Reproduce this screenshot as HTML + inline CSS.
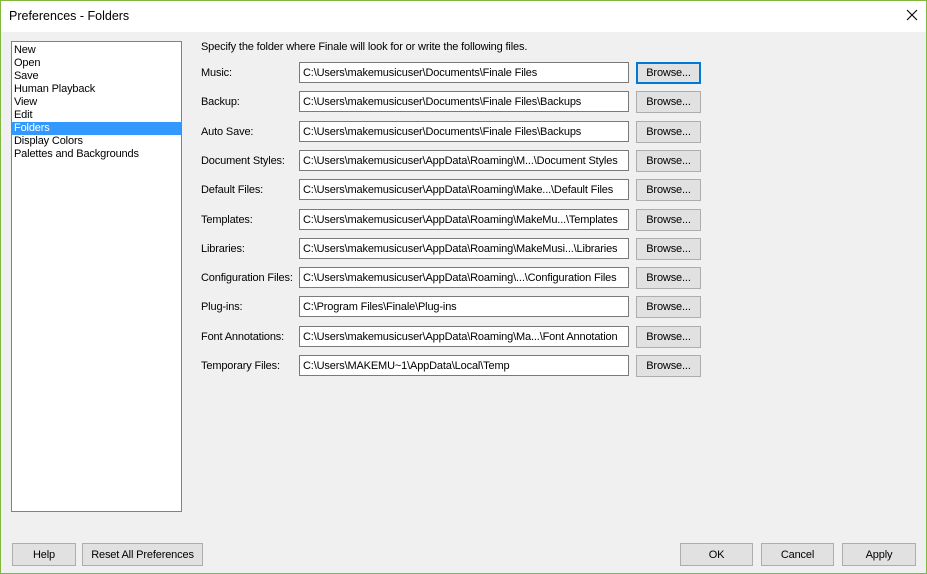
<!DOCTYPE html>
<html><head><style>
body{margin:0;width:927px;height:574px;overflow:hidden;font-family:"Liberation Sans",sans-serif;font-size:11px;letter-spacing:-0.15px;color:#000}
#win{position:absolute;left:0;top:0;width:925px;height:572px;border:1px solid #7eb83c;background:#f0f0f0}
#title{position:absolute;left:0;top:0;width:925px;height:31px;background:#fff;}
#title span{position:absolute;left:8px;top:8px;font-size:12.5px;letter-spacing:0}
#close{position:absolute;right:8px;top:8px;width:12px;height:12px}
#list{position:absolute;left:10px;top:40px;width:169px;height:469px;background:#fff;border:1px solid #828282}
#list div{height:13px;line-height:13px;padding-left:2px;white-space:nowrap}
#list .sel{background:#3399ff;color:#fff}
.lbl{position:absolute;left:200px}
.fld{position:absolute;left:298px;width:325px;height:19px;border:1px solid #7a7a7a;background:#fff;line-height:20px;padding-left:3px;white-space:nowrap;overflow:hidden}
.btn{position:absolute;background:#e1e1e1;border:1px solid #adadad;text-align:center;box-sizing:border-box}
</style></head><body>
<div id="win">
<div id="title"><span>Preferences - Folders</span>
<svg id="close" viewBox="0 0 12 12"><path d="M1 1L11 11M11 1L1 11" stroke="#000" stroke-width="1.1"/></svg></div>
<div id="list">
<div style="margin-top:2px">New</div><div>Open</div><div>Save</div><div>Human Playback</div><div>View</div><div>Edit</div><div class="sel">Folders</div><div>Display Colors</div><div>Palettes and Backgrounds</div>
</div>
<div class="lbl" style="top:40px">Specify the folder where Finale will look for or write the following files.</div>
<div id="rows"></div>
<div class="btn" style="left:11px;top:542px;width:64px;height:23px;line-height:23px">Help</div>
<div class="btn" style="left:81px;top:542px;width:121px;height:23px;line-height:23px">Reset All Preferences</div>
<div class="btn" style="left:679px;top:542px;width:73px;height:23px;line-height:23px">OK</div>
<div class="btn" style="left:760px;top:542px;width:73px;height:23px;line-height:23px">Cancel</div>
<div class="btn" style="left:841px;top:542px;width:74px;height:23px;line-height:23px">Apply</div>
</div>
<script>
var d=[["Music:","C:\\Users\\makemusicuser\\Documents\\Finale Files"],
["Backup:","C:\\Users\\makemusicuser\\Documents\\Finale Files\\Backups"],
["Auto Save:","C:\\Users\\makemusicuser\\Documents\\Finale Files\\Backups"],
["Document Styles:","C:\\Users\\makemusicuser\\AppData\\Roaming\\M...\\Document Styles"],
["Default Files:","C:\\Users\\makemusicuser\\AppData\\Roaming\\Make...\\Default Files"],
["Templates:","C:\\Users\\makemusicuser\\AppData\\Roaming\\MakeMu...\\Templates"],
["Libraries:","C:\\Users\\makemusicuser\\AppData\\Roaming\\MakeMusi...\\Libraries"],
["Configuration Files:","C:\\Users\\makemusicuser\\AppData\\Roaming\\...\\Configuration Files"],
["Plug-ins:","C:\\Program Files\\Finale\\Plug-ins"],
["Font Annotations:","C:\\Users\\makemusicuser\\AppData\\Roaming\\Ma...\\Font Annotation"],
["Temporary Files:","C:\\Users\\MAKEMU~1\\AppData\\Local\\Temp"]];
var h="";
for(var i=0;i<d.length;i++){var y=Math.round(61+i*29.3);
h+='<div class="lbl" style="top:'+(y+5)+'px">'+d[i][0]+'</div><div class="fld" style="top:'+y+'px">'+d[i][1]+'</div><div class="btn" style="left:635px;top:'+y+'px;width:65px;height:22px;line-height:21px;'+(i==0?'border:2px solid #0078d7;line-height:19px':'')+'">Browse...</div>';}
document.getElementById('rows').innerHTML=h;
</script>
</body></html>
